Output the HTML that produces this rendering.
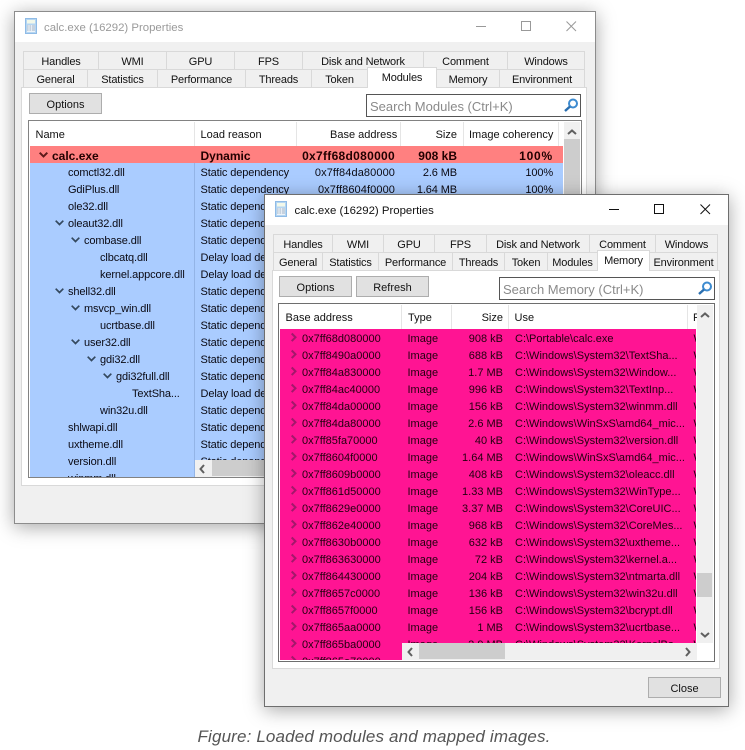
<!DOCTYPE html>
<html><head><meta charset="utf-8"><title>calc.exe Properties</title>
<style>
html,body{margin:0;padding:0;background:#fff;}
body{width:745px;height:750px;position:relative;overflow:hidden;font:11px/17px "Liberation Sans",sans-serif;color:#000;}
div,span,svg{position:absolute;box-sizing:border-box;}
.win{background:#f0f0f0;box-shadow:0 3px 18px rgba(0,0,0,.35);}
.tb{background:#fff;left:0;top:0;right:0;}
.title{font-size:11.4px;white-space:nowrap;line-height:16px;}
.t{background:#f0f0f0;border:1px solid #d9d9d9;border-bottom:0;text-align:center;white-space:nowrap;color:#111;line-height:21px;letter-spacing:-.15px;}
.sel{background:#fff;z-index:3;line-height:20px;}
.panel{background:#fff;border:1px solid #d9d9d9;}
.btn{background:#e1e1e1;border:1px solid #adadad;text-align:center;white-space:nowrap;color:#111;line-height:23px;}
.srch{background:#fff;border:1px solid #555;font-size:13px;line-height:23px;color:#8a8a8a;padding-left:3px;white-space:nowrap;}
.list{background:#fff;border:1px solid #828282;outline:0;}
.h{white-space:nowrap;color:#111;line-height:17px;}
.sep{width:1px;background:#e5e5e5;}
.rows{overflow:hidden;}
.r{left:0;right:0;height:17px;white-space:nowrap;color:#0a0a14;line-height:21px;}
.r span{white-space:nowrap;}
.red{background:#ff8080;font-weight:bold;font-size:12px;color:#200;}
.red .b{letter-spacing:.3px;}
.red .c{letter-spacing:.8px;}
.blu{background:#aaccff;}
.blu span{letter-spacing:-.12px;}
.blu .b{letter-spacing:.1px;}
.pink{background:#ff1493;color:#22000f;}
.l{left:170.5px}.b{right:168px}.s{right:106px}.c{right:10px}
.ty{left:127.5px}.sz{right:193px}.u{left:235px}.p{left:413.5px}.ad{left:22px}
.sb{background:#f0f0f0;}
.th{background:#cdcdcd;}
svg{overflow:visible;}
.ar{fill:none;stroke:#606060;stroke-width:2;}
</style></head><body>
<svg width="0" height="0" style="left:0;top:0"><defs>
<symbol id="d" overflow="visible"><path d="M0.7 0.7L4.5 4.5L8.3 0.7" fill="none" stroke="#5c1a1a" stroke-width="2"/></symbol>
<symbol id="e" overflow="visible"><path d="M0.7 0.7L4.5 4.5L8.3 0.7" fill="none" stroke="#34495f" stroke-width="1.7"/></symbol>
<symbol id="g" overflow="visible"><path d="M0.7 0.5L4.5 4.3L0.7 8.1" fill="none" stroke="#a3186b" stroke-width="2"/></symbol>
<symbol id="calc" overflow="visible"><rect x=".5" y=".5" width="11" height="15" fill="#b5d6f2" stroke="#8fbbe6"/><rect x="2" y="2" width="8" height="3.5" fill="#f2f8ea"/><rect x="2" y="7" width="8" height="7" fill="#eef3f8"/><path d="M2 8h8M2 10h8M2 12h8" stroke="#9fb2c6" stroke-width="1"/><path d="M4 7v7M6.5 7v7" stroke="#eef3f8" stroke-width=".8"/></symbol>
<symbol id="mag" overflow="visible"><circle cx="9" cy="5.500" r="4" fill="none" stroke="#3d8bd0" stroke-width="2"/><path d="M6 8.500L1 13" stroke="#2a6fb0" stroke-width="2.400"/></symbol>
</defs></svg>

<!-- Window 1 -->
<div class="win" style="left:14px;top:11px;width:582px;height:513px;border:1px solid #8c8c8c;"></div>
<div class="tb" style="left:15px;top:12px;width:580px;height:30px;right:auto"></div>
<svg style="left:25px;top:18px" width="12" height="16"><use href="#calc"/></svg>
<div class="title" style="left:44px;top:20px;color:#9a9a9a;">calc.exe (16292) Properties</div>
<svg style="left:476px;top:26px" width="11" height="1"><path d="M0 .5H10" stroke="#999"/></svg>
<div style="left:521px;top:21px;width:10px;height:10px;border:1px solid #999"></div>
<svg style="left:566px;top:21px" width="11" height="11"><path d="M.5 .5L10 10M10 .5L.5 10" stroke="#999"/></svg>

<div class="t" style="left:23px;top:51px;width:76px;height:19px">Handles</div>
<div class="t" style="left:98px;top:51px;width:69px;height:19px">WMI</div>
<div class="t" style="left:166px;top:51px;width:69px;height:19px">GPU</div>
<div class="t" style="left:234px;top:51px;width:69px;height:19px">FPS</div>
<div class="t" style="left:302px;top:51px;width:122px;height:19px">Disk and Network</div>
<div class="t" style="left:423px;top:51px;width:85px;height:19px">Comment</div>
<div class="t" style="left:507px;top:51px;width:78px;height:19px">Windows</div>
<div class="t" style="left:23px;top:69px;width:65px;height:19px">General</div>
<div class="t" style="left:87px;top:69px;width:71px;height:19px">Statistics</div>
<div class="t" style="left:157px;top:69px;width:89px;height:19px">Performance</div>
<div class="t" style="left:245px;top:69px;width:67px;height:19px">Threads</div>
<div class="t" style="left:311px;top:69px;width:57px;height:19px">Token</div>
<div class="t" style="left:436px;top:69px;width:64px;height:19px">Memory</div>
<div class="t" style="left:499px;top:69px;width:86px;height:19px">Environment</div>
<div class="panel" style="left:21px;top:87px;width:566px;height:399px"></div>
<div class="t sel" style="left:367px;top:67px;width:70px;height:21px">Modules</div>
<div class="btn" style="left:29px;top:93px;width:73px;height:21px">Options</div>
<div class="srch" style="left:366px;top:94px;width:215px;height:23px">Search Modules (Ctrl+K)</div>
<svg style="left:564px;top:98px" width="14" height="14"><use href="#mag"/></svg>
<div class="list" style="left:28px;top:120px;width:554px;height:358px"></div>
<div class="sep" style="left:194px;top:122px;height:24px"></div>
<div class="sep" style="left:296px;top:122px;height:24px"></div>
<div class="sep" style="left:400px;top:122px;height:24px"></div>
<div class="sep" style="left:463px;top:122px;height:24px"></div>
<div class="sep" style="left:558px;top:122px;height:24px"></div>
<div class="h" style="left:35.500px;top:127px">Name</div>
<div class="h" style="left:200.500px;top:127px">Load reason</div>
<div class="h" style="left:330px;top:127px;width:65px;text-align:right">Base address</div>
<div class="h" style="left:420px;top:127px;width:37px;text-align:right">Size</div>
<div class="h" style="left:469px;top:127px;width:84px;text-align:right">Image coherency</div>
<div class="sb" style="left:564px;top:122px;width:16px;height:354px"></div>
<svg class="ar" style="left:567px;top:129px" width="10" height="6"><path d="M1 5L5 1.500L9 5"/></svg>
<div class="th" style="left:564px;top:139px;width:16px;height:90px"></div>

<div class="rows" style="left:30px;top:146px;width:533px;height:331px">
<div class="r red" style="top:0"><svg style="left:9px;top:6px" width="9" height="6"><use href="#d"/></svg><span style="left:22px">calc.exe</span><span class="l">Dynamic</span><span class="b">0x7ff68d080000</span><span class="s">908 kB</span><span class="c">100%</span></div>
<div class="r blu" style="top:17px"><span style="left:38px">comctl32.dll</span><span class="l">Static dependency</span><span class="b">0x7ff84da80000</span><span class="s">2.6 MB</span><span class="c">100%</span></div>
<div class="r blu" style="top:34px"><span style="left:38px">GdiPlus.dll</span><span class="l">Static dependency</span><span class="b">0x7ff8604f0000</span><span class="s">1.64 MB</span><span class="c">100%</span></div>
<div class="r blu" style="top:51px"><span style="left:38px">ole32.dll</span><span class="l">Static dependency</span></div>
<div class="r blu" style="top:68px"><svg style="left:25px;top:6px" width="9" height="6"><use href="#e"/></svg><span style="left:38px">oleaut32.dll</span><span class="l">Static dependency</span></div>
<div class="r blu" style="top:85px"><svg style="left:41px;top:6px" width="9" height="6"><use href="#e"/></svg><span style="left:54px">combase.dll</span><span class="l">Static dependency</span></div>
<div class="r blu" style="top:102px"><span style="left:70px">clbcatq.dll</span><span class="l">Delay load dependency</span></div>
<div class="r blu" style="top:119px"><span style="left:70px">kernel.appcore.dll</span><span class="l">Delay load dependency</span></div>
<div class="r blu" style="top:136px"><svg style="left:25px;top:6px" width="9" height="6"><use href="#e"/></svg><span style="left:38px">shell32.dll</span><span class="l">Static dependency</span></div>
<div class="r blu" style="top:153px"><svg style="left:41px;top:6px" width="9" height="6"><use href="#e"/></svg><span style="left:54px">msvcp_win.dll</span><span class="l">Static dependency</span></div>
<div class="r blu" style="top:170px"><span style="left:70px">ucrtbase.dll</span><span class="l">Static dependency</span></div>
<div class="r blu" style="top:187px"><svg style="left:41px;top:6px" width="9" height="6"><use href="#e"/></svg><span style="left:54px">user32.dll</span><span class="l">Static dependency</span></div>
<div class="r blu" style="top:204px"><svg style="left:57px;top:6px" width="9" height="6"><use href="#e"/></svg><span style="left:70px">gdi32.dll</span><span class="l">Static dependency</span></div>
<div class="r blu" style="top:221px"><svg style="left:73px;top:6px" width="9" height="6"><use href="#e"/></svg><span style="left:86px">gdi32full.dll</span><span class="l">Static dependency</span></div>
<div class="r blu" style="top:238px"><span style="left:102px">TextSha...</span><span class="l">Delay load dependency</span></div>
<div class="r blu" style="top:255px"><span style="left:70px">win32u.dll</span><span class="l">Static dependency</span></div>
<div class="r blu" style="top:272px"><span style="left:38px">shlwapi.dll</span><span class="l">Static dependency</span></div>
<div class="r blu" style="top:289px"><span style="left:38px">uxtheme.dll</span><span class="l">Static dependency</span></div>
<div class="r blu" style="top:306px"><span style="left:38px">version.dll</span><span class="l">Static dependency</span></div>
<div class="r blu" style="top:323px"><span style="left:38px">winmm.dll</span><span class="l">Static dependency</span></div>
<div class="sep" style="left:164px;top:17px;height:314px;background:rgba(120,150,200,.45)"></div>
</div>
<div class="sb" style="left:195px;top:460px;width:369px;height:17px"></div>
<svg class="ar" style="left:199px;top:464px" width="6" height="10"><path d="M5 1L1.500 5L5 9"/></svg>
<div class="th" style="left:212px;top:460px;width:100px;height:16px"></div>

<!-- Window 2 -->
<div class="win" style="left:264px;top:194px;width:465px;height:513px;border:1px solid #6e6e6e;"></div>
<div class="tb" style="left:265px;top:195px;width:463px;height:30px;right:auto"></div>
<svg style="left:275px;top:201px" width="12" height="16"><use href="#calc"/></svg>
<div class="title" style="left:294.500px;top:203px;color:#111;">calc.exe (16292) Properties</div>
<svg style="left:609px;top:209px" width="11" height="1"><path d="M0 .5H10" stroke="#111"/></svg>
<div style="left:654px;top:204px;width:10px;height:10px;border:1px solid #111"></div>
<svg style="left:700px;top:204px" width="11" height="11"><path d="M.5 .5L10 10M10 .5L.5 10" stroke="#111"/></svg>

<div class="t" style="left:273px;top:234px;width:60px;height:19px">Handles</div>
<div class="t" style="left:332px;top:234px;width:52px;height:19px">WMI</div>
<div class="t" style="left:383px;top:234px;width:52px;height:19px">GPU</div>
<div class="t" style="left:434px;top:234px;width:53px;height:19px">FPS</div>
<div class="t" style="left:486px;top:234px;width:104px;height:19px">Disk and Network</div>
<div class="t" style="left:589px;top:234px;width:67px;height:19px">Comment</div>
<div class="t" style="left:655px;top:234px;width:63px;height:19px">Windows</div>
<div class="t" style="left:273px;top:252px;width:50px;height:19px">General</div>
<div class="t" style="left:322px;top:252px;width:57px;height:19px">Statistics</div>
<div class="t" style="left:378px;top:252px;width:75px;height:19px">Performance</div>
<div class="t" style="left:452px;top:252px;width:53px;height:19px">Threads</div>
<div class="t" style="left:504px;top:252px;width:44px;height:19px">Token</div>
<div class="t" style="left:547px;top:252px;width:51px;height:19px">Modules</div>
<div class="t" style="left:649px;top:252px;width:69px;height:19px">Environment</div>
<div class="panel" style="left:272px;top:270px;width:448px;height:399px"></div>
<div class="t sel" style="left:597px;top:250px;width:53px;height:21px">Memory</div>
<div class="btn" style="left:279px;top:276px;width:73px;height:21px">Options</div>
<div class="btn" style="left:356px;top:276px;width:73px;height:21px">Refresh</div>
<div class="srch" style="left:499px;top:277px;width:216px;height:23px">Search Memory (Ctrl+K)</div>
<svg style="left:698px;top:281px" width="14" height="14"><use href="#mag"/></svg>
<div class="list" style="left:278px;top:303px;width:437px;height:359px;border-color:#6e6e6e"></div>
<div class="sep" style="left:401px;top:305px;height:24px"></div>
<div class="sep" style="left:451px;top:305px;height:24px"></div>
<div class="sep" style="left:508px;top:305px;height:24px"></div>
<div class="sep" style="left:687px;top:305px;height:24px"></div>
<div class="h" style="left:285.500px;top:310px">Base address</div>
<div class="h" style="left:408px;top:310px">Type</div>
<div class="h" style="left:465px;top:310px;width:38px;text-align:right">Size</div>
<div class="h" style="left:514.500px;top:310px">Use</div>
<div class="h" style="left:693px;top:310px;width:4px;overflow:hidden">Protection</div>

<div class="rows" style="left:280px;top:329px;width:416px;height:331px">
<div class="r pink" style="top:0"><svg style="left:11px;top:4px" width="6" height="9"><use href="#g"/></svg><span class="ad">0x7ff68d080000</span><span class="ty">Image</span><span class="sz">908 kB</span><span class="u">C:\Portable\calc.exe</span><span class="p">WCX</span></div>
<div class="r pink" style="top:17px"><svg style="left:11px;top:4px" width="6" height="9"><use href="#g"/></svg><span class="ad">0x7ff8490a0000</span><span class="ty">Image</span><span class="sz">688 kB</span><span class="u">C:\Windows\System32\TextSha...</span><span class="p">WCX</span></div>
<div class="r pink" style="top:34px"><svg style="left:11px;top:4px" width="6" height="9"><use href="#g"/></svg><span class="ad">0x7ff84a830000</span><span class="ty">Image</span><span class="sz">1.7 MB</span><span class="u">C:\Windows\System32\Window...</span><span class="p">WCX</span></div>
<div class="r pink" style="top:51px"><svg style="left:11px;top:4px" width="6" height="9"><use href="#g"/></svg><span class="ad">0x7ff84ac40000</span><span class="ty">Image</span><span class="sz">996 kB</span><span class="u">C:\Windows\System32\TextInp...</span><span class="p">WCX</span></div>
<div class="r pink" style="top:68px"><svg style="left:11px;top:4px" width="6" height="9"><use href="#g"/></svg><span class="ad">0x7ff84da00000</span><span class="ty">Image</span><span class="sz">156 kB</span><span class="u">C:\Windows\System32\winmm.dll</span><span class="p">WCX</span></div>
<div class="r pink" style="top:85px"><svg style="left:11px;top:4px" width="6" height="9"><use href="#g"/></svg><span class="ad">0x7ff84da80000</span><span class="ty">Image</span><span class="sz">2.6 MB</span><span class="u">C:\Windows\WinSxS\amd64_mic...</span><span class="p">WCX</span></div>
<div class="r pink" style="top:102px"><svg style="left:11px;top:4px" width="6" height="9"><use href="#g"/></svg><span class="ad">0x7ff85fa70000</span><span class="ty">Image</span><span class="sz">40 kB</span><span class="u">C:\Windows\System32\version.dll</span><span class="p">WCX</span></div>
<div class="r pink" style="top:119px"><svg style="left:11px;top:4px" width="6" height="9"><use href="#g"/></svg><span class="ad">0x7ff8604f0000</span><span class="ty">Image</span><span class="sz">1.64 MB</span><span class="u">C:\Windows\WinSxS\amd64_mic...</span><span class="p">WCX</span></div>
<div class="r pink" style="top:136px"><svg style="left:11px;top:4px" width="6" height="9"><use href="#g"/></svg><span class="ad">0x7ff8609b0000</span><span class="ty">Image</span><span class="sz">408 kB</span><span class="u">C:\Windows\System32\oleacc.dll</span><span class="p">WCX</span></div>
<div class="r pink" style="top:153px"><svg style="left:11px;top:4px" width="6" height="9"><use href="#g"/></svg><span class="ad">0x7ff861d50000</span><span class="ty">Image</span><span class="sz">1.33 MB</span><span class="u">C:\Windows\System32\WinType...</span><span class="p">WCX</span></div>
<div class="r pink" style="top:170px"><svg style="left:11px;top:4px" width="6" height="9"><use href="#g"/></svg><span class="ad">0x7ff8629e0000</span><span class="ty">Image</span><span class="sz">3.37 MB</span><span class="u">C:\Windows\System32\CoreUIC...</span><span class="p">WCX</span></div>
<div class="r pink" style="top:187px"><svg style="left:11px;top:4px" width="6" height="9"><use href="#g"/></svg><span class="ad">0x7ff862e40000</span><span class="ty">Image</span><span class="sz">968 kB</span><span class="u">C:\Windows\System32\CoreMes...</span><span class="p">WCX</span></div>
<div class="r pink" style="top:204px"><svg style="left:11px;top:4px" width="6" height="9"><use href="#g"/></svg><span class="ad">0x7ff8630b0000</span><span class="ty">Image</span><span class="sz">632 kB</span><span class="u">C:\Windows\System32\uxtheme...</span><span class="p">WCX</span></div>
<div class="r pink" style="top:221px"><svg style="left:11px;top:4px" width="6" height="9"><use href="#g"/></svg><span class="ad">0x7ff863630000</span><span class="ty">Image</span><span class="sz">72 kB</span><span class="u">C:\Windows\System32\kernel.a...</span><span class="p">WCX</span></div>
<div class="r pink" style="top:238px"><svg style="left:11px;top:4px" width="6" height="9"><use href="#g"/></svg><span class="ad">0x7ff864430000</span><span class="ty">Image</span><span class="sz">204 kB</span><span class="u">C:\Windows\System32\ntmarta.dll</span><span class="p">WCX</span></div>
<div class="r pink" style="top:255px"><svg style="left:11px;top:4px" width="6" height="9"><use href="#g"/></svg><span class="ad">0x7ff8657c0000</span><span class="ty">Image</span><span class="sz">136 kB</span><span class="u">C:\Windows\System32\win32u.dll</span><span class="p">WCX</span></div>
<div class="r pink" style="top:272px"><svg style="left:11px;top:4px" width="6" height="9"><use href="#g"/></svg><span class="ad">0x7ff8657f0000</span><span class="ty">Image</span><span class="sz">156 kB</span><span class="u">C:\Windows\System32\bcrypt.dll</span><span class="p">WCX</span></div>
<div class="r pink" style="top:289px"><svg style="left:11px;top:4px" width="6" height="9"><use href="#g"/></svg><span class="ad">0x7ff865aa0000</span><span class="ty">Image</span><span class="sz">1 MB</span><span class="u">C:\Windows\System32\ucrtbase...</span><span class="p">WCX</span></div>
<div class="r pink" style="top:306px"><svg style="left:11px;top:4px" width="6" height="9"><use href="#g"/></svg><span class="ad">0x7ff865ba0000</span><span class="ty">Image</span><span class="sz">2.9 MB</span><span class="u">C:\Windows\System32\KernelBa...</span><span class="p">WCX</span></div>
<div class="r pink" style="top:323px"><svg style="left:11px;top:4px" width="6" height="9"><use href="#g"/></svg><span class="ad">0x7ff865e70000</span><span class="ty">Image</span><span class="sz">1.2 MB</span><span class="u">C:\Windows\System32\msvcrt.dll</span><span class="p">WCX</span></div>
</div>
<div class="sb" style="left:402px;top:643px;width:295px;height:17px;background:#f0f0f0"></div>
<svg class="ar" style="left:407px;top:647px" width="6" height="10"><path d="M5 1L1.500 5L5 9"/></svg>
<svg class="ar" style="left:685px;top:647px" width="6" height="10"><path d="M1 1L4.500 5L1 9"/></svg>
<div class="th" style="left:419px;top:643px;width:86px;height:16px"></div>
<div class="sb" style="left:697px;top:305px;width:16px;height:338px"></div>
<svg class="ar" style="left:700px;top:312px" width="10" height="6"><path d="M1 5L5 1.500L9 5"/></svg>
<svg class="ar" style="left:700px;top:632px" width="10" height="6"><path d="M1 1L5 4.500L9 1"/></svg>
<div class="th" style="left:697px;top:573px;width:15px;height:24px"></div>
<div class="btn" style="left:648px;top:677px;width:73px;height:21px">Close</div>

<div style="left:1.500px;top:727px;width:745px;text-align:center;font:italic 17px/20px 'Liberation Sans',sans-serif;letter-spacing:.15px;color:#555;white-space:nowrap;">Figure: Loaded modules and mapped images.</div>
</body></html>
